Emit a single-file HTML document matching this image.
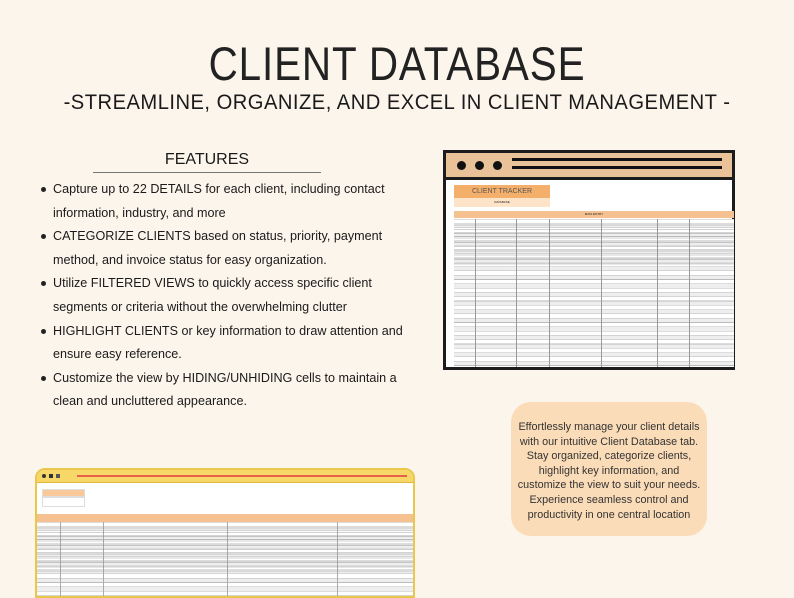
<!DOCTYPE html>
<html><head><meta charset="utf-8"><style>
*{margin:0;padding:0;box-sizing:border-box}
body{width:794px;height:596px;background:#fcf5ec;position:relative;overflow:hidden;font-family:"Liberation Sans",sans-serif;color:#1a1a1a}
.a{position:absolute}
h1{position:absolute;left:0;width:794px;top:36px;text-align:center;font-weight:normal;font-size:47px;letter-spacing:1px;transform:scaleX(0.86);color:#222}
.sub{left:0;width:794px;top:91px;text-align:center;font-size:21px;letter-spacing:0.5px;transform:scaleX(0.96)}
.feat{left:93px;width:228px;top:151px;text-align:center;font-size:16px;padding-bottom:3px;border-bottom:1.5px solid #777}
ul{position:absolute;left:41px;top:178px;width:370px;list-style:none;font-size:12.6px;line-height:23.6px}
li{padding-left:12px;position:relative}
li:before{content:"";position:absolute;left:0;top:9px;width:5px;height:5px;border-radius:50%;background:#222}
.win{left:443px;top:150px;width:292px;height:220px;border:3px solid #1c1c1c;background:#fff}
.bar{left:0;top:0;width:286px;height:27px;background:#e9c29a;border-bottom:3px solid #1c1c1c}
.dot{width:9px;height:9px;border-radius:50%;background:#111;top:8px}
.ln{height:3px;background:#111;left:66px;width:210px}
.grid{background-image:repeating-linear-gradient(to bottom,#bbb 0,#bbb 0.6px,transparent 0.6px,transparent 4.3px),repeating-linear-gradient(to bottom,#fff 0,#fff 4.3px,#eee 4.3px,#eee 8.6px)}
.note{left:511px;top:402px;width:196px;height:134px;background:#fbdcb8;border-radius:20px;text-align:center;font-size:10.8px;line-height:14.6px;padding-top:18px;color:#333}
.win2{left:35px;top:468px;width:380px;height:130px;border:2px solid #e9c74a;border-radius:10px 10px 0 0;background:#fff;overflow:hidden}
</style></head><body>
<h1>CLIENT DATABASE</h1>
<div class="a sub">-STREAMLINE, ORGANIZE, AND EXCEL IN CLIENT MANAGEMENT -</div>
<div class="a feat">FEATURES</div>
<ul>
<li>Capture up to 22 DETAILS for each client, including contact information, industry, and more</li>
<li>CATEGORIZE CLIENTS based on status, priority, payment method, and invoice status for easy organization.</li>
<li>Utilize FILTERED VIEWS to quickly access specific client segments or criteria without the overwhelming clutter</li>
<li>HIGHLIGHT CLIENTS or key information to draw attention and ensure easy reference.</li>
<li>Customize the view by HIDING/UNHIDING cells to maintain a clean and uncluttered appearance.</li>
</ul>

<div class="a win">
 <div class="a bar">
  <div class="a dot" style="left:11px"></div><div class="a dot" style="left:29px"></div><div class="a dot" style="left:47px"></div>
  <div class="a ln" style="top:5px"></div><div class="a ln" style="top:13px"></div>
 </div>
 <div class="a" style="left:8px;top:32px;width:96px;height:13px;background:#f4b06b;font-size:7px;text-align:center;line-height:13px;color:#555">CLIENT TRACKER</div>
 <div class="a" style="left:8px;top:45px;width:96px;height:9px;background:#fde3c8;font-size:3px;text-align:center;line-height:9px">DATABASE</div>
 <div class="a" style="left:8px;top:58px;width:280px;height:7px;background:#f6c190;font-size:3px;text-align:center;line-height:7px">MAIN ENTRY</div>
 <div class="a grid" style="left:8px;top:66px;width:280px;height:148px"></div>
 <div class="a" style="left:8px;top:66px;width:280px;height:148px;background-image:linear-gradient(to right,transparent 21px,#999 21px,#999 22px,transparent 22px,transparent 62px,#999 62px,#999 63px,transparent 63px,transparent 95px,#999 95px,#999 96px,transparent 96px,transparent 147px,#999 147px,#999 148px,transparent 148px,transparent 203px,#999 203px,#999 204px,transparent 204px,transparent 235px,#999 235px,#999 236px,transparent 236px)"></div>
 <div class="a" style="left:8px;top:70px;width:280px;height:43px;background:repeating-linear-gradient(to bottom,transparent 0,transparent 1.5px,rgba(120,120,120,.35) 1.5px,rgba(120,120,120,.35) 2.6px,transparent 2.6px,transparent 4.3px)"></div>
</div>

<div class="a note">Effortlessly manage your client details<br>with our intuitive Client Database tab.<br>Stay organized, categorize clients,<br>highlight key information, and<br>customize the view to suit your needs.<br>Experience seamless control and<br>productivity in one central location</div>

<div class="a win2">
 <div class="a" style="left:0;top:0;width:380px;height:13px;background:#f7d768;border-bottom:1px solid #e0b840"></div>
 <div class="a" style="left:5px;top:4px;width:4px;height:4px;border-radius:50%;background:#333"></div>
 <div class="a" style="left:12px;top:4px;width:4px;height:4px;background:#333"></div>
 <div class="a" style="left:19px;top:4px;width:4px;height:4px;background:#555"></div>
 <div class="a" style="left:40px;top:5px;width:330px;height:2px;background:#e8604a"></div>
 <div class="a" style="left:5px;top:19px;width:43px;height:8px;background:#f9c99a;border:1px solid #ddd"></div>
 <div class="a" style="left:5px;top:27px;width:43px;height:10px;background:#fff;border:1px solid #ddd"></div>
 <div class="a" style="left:0;top:44px;width:380px;height:8px;background:#f6c190"></div>
 <div class="a grid" style="left:0;top:52px;width:380px;height:80px"></div>
 <div class="a" style="left:0;top:52px;width:380px;height:80px;background-image:linear-gradient(to right,transparent 23px,#aaa 23px,#aaa 24px,transparent 24px,transparent 66px,#aaa 66px,#aaa 67px,transparent 67px,transparent 190px,#aaa 190px,#aaa 191px,transparent 191px,transparent 300px,#aaa 300px,#aaa 301px,transparent 301px)"></div>
 <div class="a" style="left:0;top:56px;width:380px;height:48px;background:repeating-linear-gradient(to bottom,transparent 0,transparent 1.5px,rgba(120,120,120,.35) 1.5px,rgba(120,120,120,.35) 2.6px,transparent 2.6px,transparent 4.3px)"></div>
</div>
</body></html>
